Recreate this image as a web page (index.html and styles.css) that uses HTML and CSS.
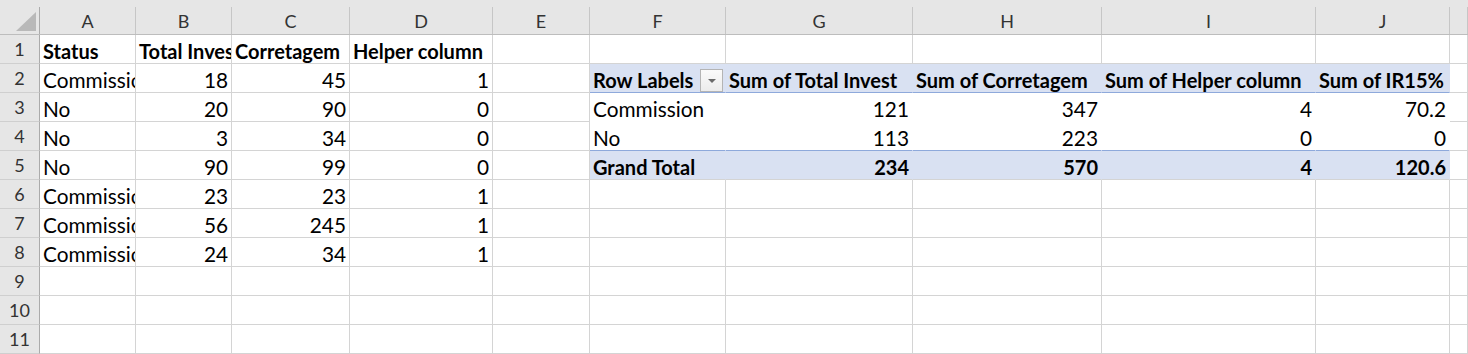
FILE: index.html
```html
<!DOCTYPE html>
<html lang="en">

<head>
    <meta charset="UTF-8">
    <meta name="viewport" content="width=device-width, initial-scale=1.0">
    <title>Sheet1</title>
    <link rel="stylesheet" href="styles.css">
</head>

<body>
    <!-- column letters -->
    <div class="col-heads">
        <div class="corner"></div>
        <div>A</div>
        <div>B</div>
        <div>C</div>
        <div>D</div>
        <div>E</div>
        <div>F</div>
        <div>G</div>
        <div>H</div>
        <div>I</div>
        <div>J</div>
        <div></div>
    </div>

    <div class="sheet">
        <!-- row 1 -->
        <div class="rh">1</div>
        <div class="b">Status</div>
        <div class="b">Total Invest</div>
        <div class="b">Corretagem</div>
        <div class="b">Helper column</div>
        <div></div>
        <div></div>
        <div></div>
        <div></div>
        <div></div>
        <div></div>
        <div></div>

        <!-- row 2 -->
        <div class="rh">2</div>
        <div>Commission</div>
        <div class="num">18</div>
        <div class="num">45</div>
        <div class="num">1</div>
        <div></div>
        <div class="pv-head labels">Row Labels<span class="filter-btn"></span></div>
        <div class="pv-head">Sum of Total Invest</div>
        <div class="pv-head">Sum of Corretagem</div>
        <div class="pv-head">Sum of Helper column</div>
        <div class="pv-head">Sum of IR15%</div>
        <div></div>

        <!-- row 3 -->
        <div class="rh">3</div>
        <div>No</div>
        <div class="num">20</div>
        <div class="num">90</div>
        <div class="num">0</div>
        <div></div>
        <div class="pv">Commission</div>
        <div class="pv num">121</div>
        <div class="pv num">347</div>
        <div class="pv num">4</div>
        <div class="pv num">70.2</div>
        <div></div>

        <!-- row 4 -->
        <div class="rh">4</div>
        <div>No</div>
        <div class="num">3</div>
        <div class="num">34</div>
        <div class="num">0</div>
        <div></div>
        <div class="pv pv-end">No</div>
        <div class="pv pv-end num">113</div>
        <div class="pv pv-end num">223</div>
        <div class="pv pv-end num">0</div>
        <div class="pv pv-end num">0</div>
        <div></div>

        <!-- row 5 -->
        <div class="rh">5</div>
        <div>No</div>
        <div class="num">90</div>
        <div class="num">99</div>
        <div class="num">0</div>
        <div></div>
        <div class="pv-total">Grand Total</div>
        <div class="pv-total num">234</div>
        <div class="pv-total num">570</div>
        <div class="pv-total num">4</div>
        <div class="pv-total num">120.6</div>
        <div></div>

        <!-- row 6 -->
        <div class="rh">6</div>
        <div>Commission</div>
        <div class="num">23</div>
        <div class="num">23</div>
        <div class="num">1</div>
        <div></div>
        <div></div>
        <div></div>
        <div></div>
        <div></div>
        <div></div>
        <div></div>

        <!-- row 7 -->
        <div class="rh">7</div>
        <div>Commission</div>
        <div class="num">56</div>
        <div class="num">245</div>
        <div class="num">1</div>
        <div></div>
        <div></div>
        <div></div>
        <div></div>
        <div></div>
        <div></div>
        <div></div>

        <!-- row 8 -->
        <div class="rh">8</div>
        <div>Commission</div>
        <div class="num">24</div>
        <div class="num">34</div>
        <div class="num">1</div>
        <div></div>
        <div></div>
        <div></div>
        <div></div>
        <div></div>
        <div></div>
        <div></div>

        <!-- row 9 -->
        <div class="rh">9</div>
        <div></div>
        <div></div>
        <div></div>
        <div></div>
        <div></div>
        <div></div>
        <div></div>
        <div></div>
        <div></div>
        <div></div>
        <div></div>

        <!-- row 10 -->
        <div class="rh">10</div>
        <div></div>
        <div></div>
        <div></div>
        <div></div>
        <div></div>
        <div></div>
        <div></div>
        <div></div>
        <div></div>
        <div></div>
        <div></div>

        <!-- row 11 -->
        <div class="rh">11</div>
        <div></div>
        <div></div>
        <div></div>
        <div></div>
        <div></div>
        <div></div>
        <div></div>
        <div></div>
        <div></div>
        <div></div>
        <div></div>
    </div>
</body>

</html>
```

FILE: styles.css
```css
:root {
    --cols: 40px 96px 96px 118px 143px 97px 136px 187px 189px 214px 134px 1fr;
}

body {
    font-family: Lato, "Liberation Sans", sans-serif;
    background-color: #fff;
    color: #000;
    margin: 0;
    overflow: hidden;
}

/* column letters */
.col-heads {
    display: grid;
    grid-template-columns: var(--cols);
    height: 35px;
    box-sizing: border-box;
    padding-top: 7px;
    background-color: #e6e6e6;
    border-bottom: 1px solid #bdbdbd;
}

.col-heads div {
    display: flex;
    align-items: center;
    justify-content: center;
    border-right: 1px solid #c6c6c6;
    font-size: 18px;
    color: #333;
}

.col-heads .corner {
    position: relative;
    border-right-color: #ababab;
}

.corner::after {
    content: "";
    position: absolute;
    right: 3px;
    bottom: 3px;
    width: 20px;
    height: 19px;
    background-color: #b9b9b9;
    clip-path: polygon(100% 0, 100% 100%, 0 100%);
}

/* cells */
.sheet {
    display: grid;
    grid-template-columns: var(--cols);
    grid-auto-rows: 29px;
}

.sheet > div {
    display: flex;
    align-items: flex-end;
    box-sizing: border-box;
    padding: 0 3px;
    border-right: 1px solid #d4d4d4;
    border-bottom: 1px solid #d4d4d4;
    font-size: 20.8px;
    line-height: 24px;
    white-space: nowrap;
    overflow: hidden;
}

.sheet > .rh {
    align-items: center;
    justify-content: center;
    padding: 0;
    background-color: #e6e6e6;
    border-right-color: #ababab;
    border-bottom-color: #cfcfcf;
    font-size: 18px;
    color: #333;
}

/* bold runs a little wide, so it gets a smaller size */
.sheet > .b,
.sheet > .pv-head,
.sheet > .pv-total {
    font-weight: bold;
    font-size: 20px;
}

.num {
    justify-content: flex-end;
}

/* pivot table */
.sheet > .pv-head {
    background-color: #d9e1f2;
    border-right-color: #d9e1f2;
    border-bottom-color: #8ea9db;
}

.sheet > .pv {
    border-right-color: #fff;
    border-bottom-color: #fff;
}

.sheet > .pv-end {
    border-bottom-color: #8ea9db;
}

.sheet > .pv-total {
    background-color: #d9e1f2;
    border-right-color: #d9e1f2;
}

.sheet > .labels {
    padding-right: 2px;
}

.filter-btn {
    position: relative;
    flex: none;
    width: 23px;
    height: 23px;
    margin-left: auto;
    box-sizing: border-box;
    border: 1px solid #b4b4b4;
    background: linear-gradient(#fafafa, #ececec);
}

.filter-btn::after {
    content: "";
    position: absolute;
    left: 7px;
    top: 9px;
    border-left: 4px solid transparent;
    border-right: 4px solid transparent;
    border-top: 4px solid #6a6a6a;
}
```
